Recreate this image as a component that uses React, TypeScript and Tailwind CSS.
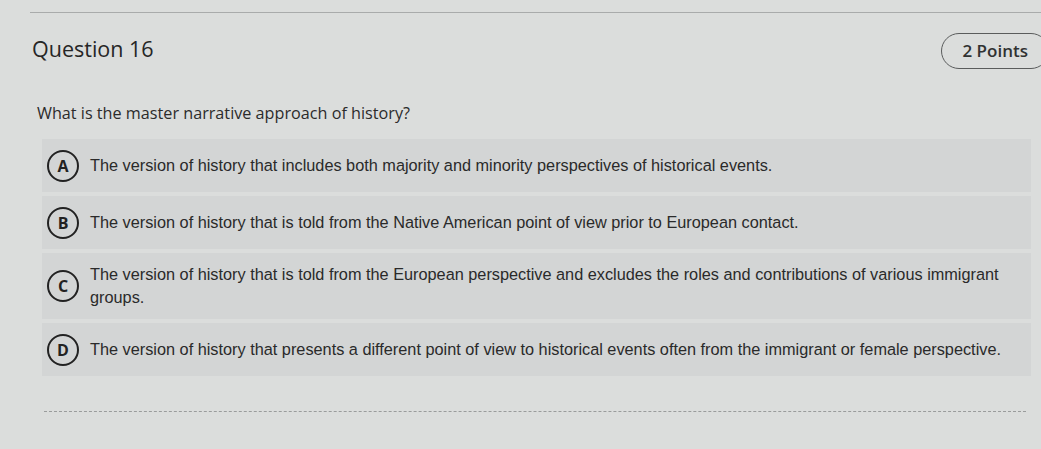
const options = [
  { letter: "A", text: "The version of history that includes both majority and minority perspectives of historical events." },
  { letter: "B", text: "The version of history that is told from the Native American point of view prior to European contact." },
  {
    letter: "C",
    text: "The version of history that is told from the European perspective and excludes the roles and contributions of various immigrant groups.",
  },
  {
    letter: "D",
    text: "The version of history that presents a different point of view to historical events often from the immigrant or female perspective.",
  },
];

export default function App() {
  return (
    <div className="w-[1041px] h-[449px] overflow-hidden bg-[#dbdddc] pt-[12px]">
      <div className="ml-[30px] border-t border-[#a9abab]" />

      <div className="flex items-center justify-between pl-[32px] pt-[16px]">
        <h2 className="text-[21.5px] leading-[28px] text-[#262626] font-['Open_Sans',sans-serif]">Question 16</h2>
        <div className="-mr-[8px] mt-[4px] rounded-full border-[1.5px] border-[#5a5c5c] px-[20px] py-[6px] text-[17px] leading-[22px] font-semibold text-[#303232] font-['Open_Sans',sans-serif]">
          2 Points
        </div>
      </div>

      <p className="pl-[37px] pt-[32px] text-[16.2px] leading-[24px] text-[#2b2b2b] font-['Open_Sans',sans-serif]">
        What is the master narrative approach of history?
      </p>

      <div className="mt-[14px] ml-[42px] mr-[10px] flex flex-col gap-[4px]">
        {options.map((o) => (
          <div key={o.letter} className="flex items-center gap-[11px] bg-[#d3d5d5] pl-[5px] pr-[24px] py-[10px] min-h-[53px]">
            <div className="flex h-[32px] w-[32px] shrink-0 items-center justify-center rounded-full border-2 border-[#222] text-[16px] font-bold text-[#222] font-['Open_Sans',sans-serif]">
              {o.letter}
            </div>
            <p className="text-[16.3px] leading-[23px] text-[#2a2a2a] font-['Liberation_Sans',Arial,sans-serif]">{o.text}</p>
          </div>
        ))}
      </div>

      <div className="mt-[35px] ml-[44px] mr-[15px] border-t border-dashed border-[#9a9c9c]" />
    </div>
  );
}
